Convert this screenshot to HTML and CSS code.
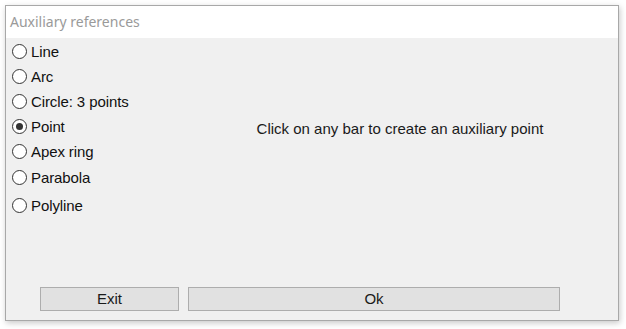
FILE: index.html
```html
<!DOCTYPE html>
<html>
<head>
<meta charset="utf-8">
<link rel="stylesheet" href="styles.css">
</head>
<body>
<div class="window">
  <div class="titlebar">Auxiliary references</div>
  <div class="content">
    <div class="main">
      <div class="options">
        <div class="opt"><span class="radio"></span><span class="label">Line</span></div>
        <div class="opt"><span class="radio"></span><span class="label">Arc</span></div>
        <div class="opt"><span class="radio"></span><span class="label">Circle: 3 points</span></div>
        <div class="opt"><span class="radio checked"></span><span class="label">Point</span></div>
        <div class="opt"><span class="radio"></span><span class="label">Apex ring</span></div>
        <div class="opt"><span class="radio"></span><span class="label">Parabola</span></div>
        <div class="opt last"><span class="radio"></span><span class="label">Polyline</span></div>
      </div>
      <div class="message">Click on any bar to create an auxiliary point</div>
    </div>
    <div class="buttons">
      <div class="btn exit">Exit</div>
      <div class="btn ok">Ok</div>
    </div>
  </div>
</div>
</body>
</html>
```
FILE: styles.css
```css
html, body {
  margin: 0;
  padding: 0;
  background: #ffffff;
}
body {
  font-family: "Liberation Sans", Arial, sans-serif;
  width: 626px;
  height: 329px;
  overflow: hidden;
}
.window {
  margin: 5px 0 0 5px;
  width: 612px;
  height: 314px;
  border: 1px solid #a8a8a8;
  box-shadow: 1px 2px 6px rgba(0, 0, 0, 0.22);
  display: flex;
  flex-direction: column;
  background: #f0f0f0;
}
.titlebar {
  height: 32px;
  background: #ffffff;
  color: #9a9a9a;
  font-family: "Noto Sans", "Open Sans", sans-serif;
  font-size: 14px;
  line-height: 32px;
  padding-left: 4px;
}
.content {
  flex: 1;
  display: flex;
  flex-direction: column;
}
.main {
  flex: 1;
  display: flex;
}
.options {
  width: 170px;
  padding-left: 6px;
  padding-top: 1px;
}
.opt {
  height: 25px;
  display: flex;
  align-items: center;
  font-size: 15px;
  color: #111;
}
.opt:nth-child(6) {
  height: 26px;
}
.opt.last {
  margin-top: 3px;
}
.radio {
  width: 15px;
  height: 15px;
  border: 1px solid #333;
  border-radius: 50%;
  background: #fff;
  box-sizing: border-box;
  display: flex;
  align-items: center;
  justify-content: center;
  margin-right: 4px;
  flex: none;
}
.radio.checked::after {
  content: "";
  width: 7px;
  height: 7px;
  border-radius: 50%;
  background: #333;
}
.label {
  letter-spacing: -0.1px;
}
.message {
  flex: 1;
  text-align: center;
  font-size: 15px;
  color: #1a1a1a;
  padding-top: 82px;
}
.buttons {
  display: flex;
  gap: 9px;
  padding-left: 34px;
  padding-bottom: 9px;
}
.btn {
  height: 22px;
  border: 1px solid #adadad;
  background: #e1e1e1;
  font-size: 15px;
  color: #1a1a1a;
  line-height: 22px;
  text-align: center;
}
.exit {
  width: 137px;
}
.ok {
  width: 370px;
}
```
